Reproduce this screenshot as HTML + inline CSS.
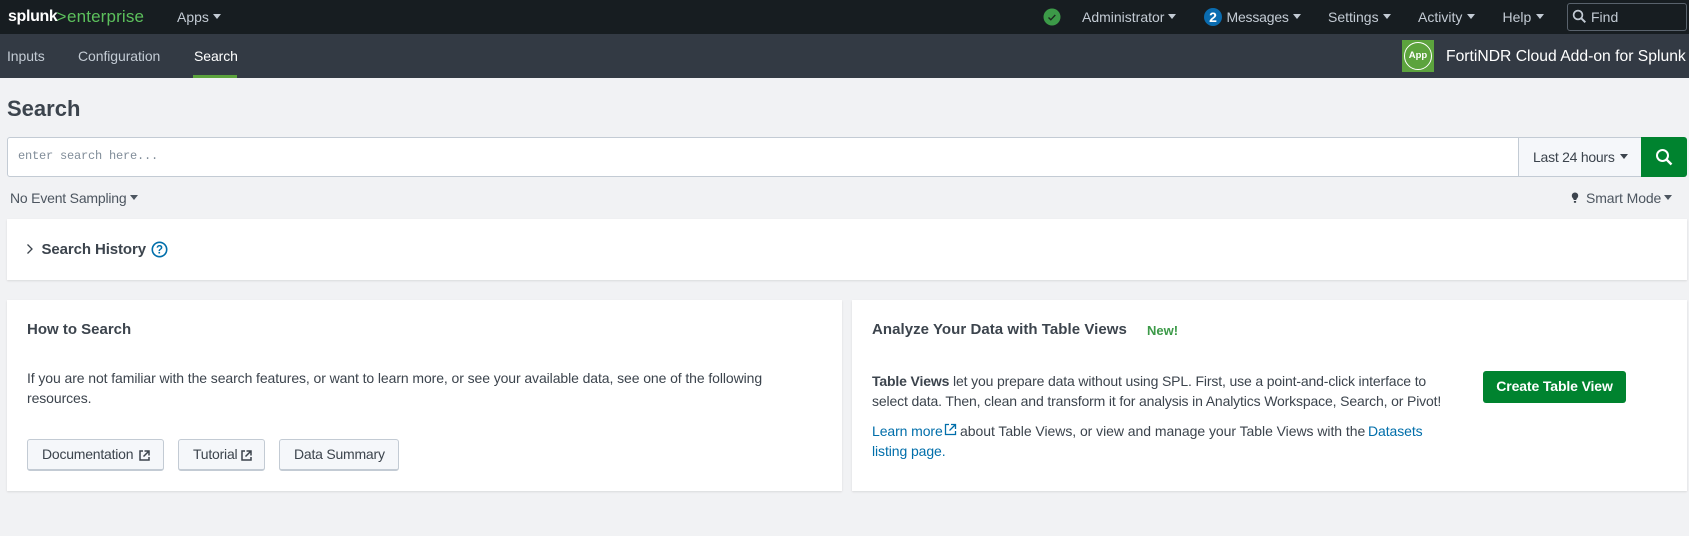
<!DOCTYPE html>
<html><head><meta charset="utf-8"><style>
html,body{margin:0;padding:0}
body{width:1689px;height:536px;background:#f1f2f4;position:relative;overflow:hidden;font-family:"Liberation Sans",sans-serif;color:#3c444d}
.a{position:absolute;white-space:nowrap}
.car{position:absolute;width:0;height:0;border-left:4px solid transparent;border-right:4px solid transparent;border-top:5px solid currentColor}
.top{color:#c3cbd4;font-size:14px;line-height:34px;top:0}
.nav{color:#c3cbd4;font-size:14px;line-height:44px;top:34px;letter-spacing:-.08px}
.panel{position:absolute;background:#fff;box-shadow:0 1px 2px rgba(0,0,0,.1)}
.btn{position:absolute;box-sizing:border-box;height:32px;top:439px;background:#f5f7fa;border:1px solid #c3cbd4;border-bottom-width:2px;border-radius:3px;font-size:14px;line-height:29px;color:#3c444d;padding-left:14px;white-space:nowrap;letter-spacing:-.22px}
.p{font-size:14px;line-height:20px;color:#3c444d;letter-spacing:-.09px}
.q{letter-spacing:-.145px}
a{color:#006eaa;text-decoration:none}
</style></head><body>
<div class="a" style="left:0;top:0;width:1689px;height:34px;background:#171d21"></div>
<div class="a" style="left:0;top:34px;width:1689px;height:44px;background:#333a44"></div>
<div class="a" style="left:8px;top:0;line-height:33px;font-size:16px;color:#fff;font-weight:700;letter-spacing:-.35px">splunk</div>
<div class="a" style="left:56.500px;top:0;line-height:33px;font-size:17px;color:#5cc05c">&gt;</div>
<div class="a" style="left:67px;top:0;line-height:33px;font-size:17px;color:#5cc05c;letter-spacing:.15px">enterprise</div>
<div class="a top" style="left:177px">Apps</div><i class="car" style="left:213px;top:14px;color:#c3cbd4"></i>
<svg class="a" style="left:1043px;top:8px" width="18" height="18" viewBox="0 0 18 18"><circle cx="9" cy="9" r="8.500" fill="#3c9a48"/><path d="M5.500 9.500l2.300 2.300 4.500-4.800" fill="none" stroke="#1c2a20" stroke-width="1.400"/></svg>
<div class="a top" style="left:1082px">Administrator</div><i class="car" style="left:1167.500px;top:14px;color:#c3cbd4"></i>
<div class="a" style="left:1204px;top:7.500px;width:18px;height:18px;border-radius:50%;background:#0a6cb0;color:#fff;font-size:14px;line-height:18px;text-align:center;font-weight:700">2</div>
<div class="a top" style="left:1226.500px;letter-spacing:-.2px">Messages</div><i class="car" style="left:1293px;top:14px;color:#c3cbd4"></i>
<div class="a top" style="left:1328px">Settings</div><i class="car" style="left:1383px;top:14px;color:#c3cbd4"></i>
<div class="a top" style="left:1418px">Activity</div><i class="car" style="left:1467px;top:14px;color:#c3cbd4"></i>
<div class="a top" style="left:1502.500px">Help</div><i class="car" style="left:1536px;top:14px;color:#c3cbd4"></i>
<div class="a" style="left:1567px;top:3px;box-sizing:border-box;width:120px;height:28px;border:1px solid #59626c;border-radius:3px"></div>
<svg class="a" style="left:1572px;top:9px" width="15" height="15" viewBox="0 0 15 15"><circle cx="6" cy="6" r="4.400" fill="none" stroke="#c3cbd4" stroke-width="1.700"/><path d="M9.300 9.300l4 4" stroke="#c3cbd4" stroke-width="2"/></svg>
<div class="a top" style="left:1591px">Find</div>
<div class="a nav" style="left:7px">Inputs</div>
<div class="a nav" style="left:78px">Configuration</div>
<div class="a nav" style="left:194px;color:#fff">Search</div>
<div class="a" style="left:193px;top:75px;width:44px;height:3px;background:#5ca33d"></div>
<div class="a" style="left:1402px;top:40px;width:32px;height:32px;background:#5ca33d"></div>
<div class="a" style="left:1404px;top:42px;box-sizing:border-box;width:28px;height:28px;border:1.500px solid #fff;border-radius:50%;color:#fff;font-size:9.500px;line-height:25px;text-align:center;font-weight:700">App</div>
<div class="a" style="left:1446px;top:35px;line-height:44px;font-size:15.700px;color:#fff">FortiNDR Cloud Add-on for Splunk</div>
<div class="a" style="left:7px;top:95px;font-size:22px;line-height:28px;font-weight:700;color:#3c444d">Search</div>
<div class="a" style="left:7px;top:137px;box-sizing:border-box;width:1512px;height:40px;background:#fff;border:1px solid #c3cbd4;border-radius:3px 0 0 3px"></div>
<div class="a" style="left:18px;top:146px;font-family:'Liberation Mono',monospace;font-size:12px;line-height:20px;color:#818d99;letter-spacing:-.2px">enter search here...</div>
<div class="a" style="left:1518px;top:137px;box-sizing:border-box;width:124px;height:40px;background:#f5f7fa;border:1px solid #c3cbd4;border-right:0"></div>
<div class="a" style="left:1533px;top:147px;font-size:14px;line-height:20px;color:#3c444d;letter-spacing:-.25px">Last 24 hours</div><i class="car" style="left:1620px;top:154px;color:#3c444d"></i>
<div class="a" style="left:1641px;top:137px;width:46px;height:40px;background:#00832f;border-radius:0 3px 3px 0"></div>
<svg class="a" style="left:1655px;top:148px" width="19" height="19" viewBox="0 0 19 19"><circle cx="7.500" cy="7.500" r="5.500" fill="none" stroke="#fff" stroke-width="2"/><path d="M11.500 11.500l5 5" stroke="#fff" stroke-width="2.400"/></svg>
<div class="a" style="left:10px;top:188px;font-size:14px;line-height:20px;color:#4d5660;letter-spacing:-.2px">No Event Sampling</div><i class="car" style="left:130px;top:195px;color:#4d5660"></i>
<svg class="a" style="left:1570px;top:191px" width="10" height="14" viewBox="0 0 10 14"><path d="M5 1.500a3.200 3.200 0 0 1 3.200 3.200c0 1.800-1.600 2.600-2 4.300H3.800c-.4-1.700-2-2.500-2-4.300A3.200 3.200 0 0 1 5 1.500zM3.900 10h2.200v1.700H3.900z" fill="#3c444d"/></svg>
<div class="a" style="left:1586px;top:188px;font-size:14px;line-height:20px;color:#4d5660;letter-spacing:-.1px">Smart Mode</div><i class="car" style="left:1664px;top:195px;color:#4d5660"></i>
<div class="panel" style="left:7px;top:219px;width:1680px;height:61px"></div>
<svg class="a" style="left:25px;top:243px" width="10" height="12" viewBox="0 0 10 12"><path d="M2.500 1.500L7 6l-4.500 4.500" fill="none" stroke="#3c444d" stroke-width="1.300"/></svg>
<div class="a" style="left:41.500px;top:238.500px;font-size:15px;line-height:22px;font-weight:700;color:#3c444d;letter-spacing:-.1px">Search History</div>
<svg class="a" style="left:151px;top:241px" width="17" height="17" viewBox="0 0 17 17"><circle cx="8.500" cy="8.500" r="7.200" fill="none" stroke="#006eaa" stroke-width="1.600"/><text x="8.500" y="12.500" font-family="Liberation Sans" font-size="11.500" font-weight="700" text-anchor="middle" fill="#006eaa">?</text></svg>
<div class="panel" style="left:7px;top:300px;width:835px;height:191px"></div>
<div class="panel" style="left:852px;top:300px;width:835px;height:191px"></div>
<div class="a" style="left:27px;top:320px;font-size:15px;line-height:20px;font-weight:700;color:#3c444d">How to Search</div>
<div class="a p" style="left:27px;top:368px">If you are not familiar with the search features, or want to learn more, or see your available data, see one of the following</div>
<div class="a p" style="left:27px;top:388px">resources.</div>
<div class="btn" style="left:27px;width:137px">Documentation</div>
<svg class="a" style="left:139px;top:449.500px" width="11" height="11" viewBox="0 0 11 11"><path d="M4 1H1v9h9V7M5.500 1H10v4.500M9.500 1.500L4.500 6.500" fill="none" stroke="#3c444d" stroke-width="1.500"/></svg>
<div class="btn" style="left:178px;width:87px">Tutorial</div>
<svg class="a" style="left:241px;top:449.500px" width="11" height="11" viewBox="0 0 11 11"><path d="M4 1H1v9h9V7M5.500 1H10v4.500M9.500 1.500L4.500 6.500" fill="none" stroke="#3c444d" stroke-width="1.500"/></svg>
<div class="btn" style="left:279px;width:120px">Data Summary</div>
<div class="a" style="left:872px;top:320px;font-size:15px;line-height:20px;font-weight:700;color:#3c444d;letter-spacing:.05px">Analyze Your Data with Table Views</div>
<div class="a" style="left:1147px;top:321px;font-size:13px;line-height:20px;font-weight:700;color:#3c9a48">New!</div>
<div class="a p q" style="left:872px;top:371px"><b>Table Views</b> let you prepare data without using SPL. First, use a point-and-click interface to</div>
<div class="a p q" style="left:872px;top:391px">select data. Then, clean and transform it for analysis in Analytics Workspace, Search, or Pivot!</div>
<div class="a p" style="left:872px;top:421px"><a href="#">Learn more</a></div>
<svg class="a" style="left:944px;top:423px" width="13" height="13" viewBox="0 0 13 13"><path d="M5 1.500H1.500v10h10V8M7 1.500h4.500V6M11 2L5.500 7.500" fill="none" stroke="#006eaa" stroke-width="1.300"/></svg>
<div class="a p" style="left:960px;top:421px;letter-spacing:-.05px">about Table Views, or view and manage your Table Views with the</div>
<div class="a p" style="left:1368px;top:421px"><a href="#">Datasets</a></div>
<div class="a p" style="left:872px;top:441px"><a href="#">listing page.</a></div>
<div class="a" style="left:1483px;top:371px;width:143px;height:32px;background:#00832f;border-radius:3px;color:#fff;font-size:14px;line-height:31px;font-weight:700;text-align:center;letter-spacing:-.12px">Create Table View</div>
</body></html>
